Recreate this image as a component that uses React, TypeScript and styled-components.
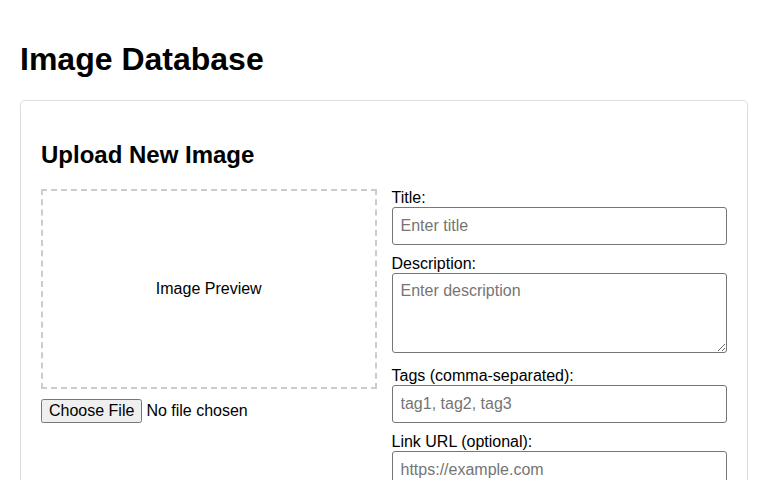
import React from "react";
import styled, { createGlobalStyle } from "styled-components";

const GlobalStyle = createGlobalStyle`
  html, body {
    margin: 0;
    padding: 0;
    background: #ffffff;
    color: #000000;
    font-family: "Liberation Sans", Arial, sans-serif;
  }
  * { box-sizing: border-box; }
`;

const Page = styled.div`
  padding: 20px;
  font-family: "Liberation Sans", Arial, sans-serif;
`;

const Title = styled.h1`
  font-size: 32px;
  font-weight: bold;
  margin: 21.44px 0;
`;

const Card = styled.section`
  border: 1px solid #dddddd;
  border-radius: 5px;
  padding: 20px;
`;

const CardTitle = styled.h2`
  font-size: 24px;
  font-weight: bold;
  margin: 19.92px 0;
`;

const Grid = styled.div`
  display: grid;
  grid-template-columns: 1fr 1fr;
  gap: 15px;
  align-items: start;
`;

const Column = styled.div`
  min-width: 0;
`;

const Preview = styled.div`
  height: 200px;
  border: 2px dashed #cccccc;
  display: flex;
  align-items: center;
  justify-content: center;
  font-size: 16px;
`;

const FileInput = styled.input`
  display: block;
  margin-top: 10px;
  font-family: "Liberation Sans", Arial, sans-serif;
  font-size: 16px;
`;

const FormGroup = styled.div`
  margin-bottom: 10px;
`;

const Label = styled.label`
  display: block;
  font-size: 16px;
`;

const fieldStyles = `
  width: 100%;
  font-family: "Liberation Sans", Arial, sans-serif;
  font-size: 16px;
  border: 1px solid #767676;
  border-radius: 3px;
  color: #000;
  &::placeholder { color: #757575; }
`;

const TextInput = styled.input`
  ${fieldStyles}
  height: 38px;
  padding: 8px;
`;

const TextArea = styled.textarea`
  ${fieldStyles}
  height: 80px;
  padding: 8px;
`;

const SubmitButton = styled.button`
  font-family: "Liberation Sans", Arial, sans-serif;
  font-size: 16px;
  padding: 10px 20px;
  background: #4caf50;
  color: #fff;
  border: none;
  border-radius: 4px;
`;

export default function App() {
  return (
    <>
      <GlobalStyle />
      <Page>
        <Title>Image Database</Title>
        <Card>
          <CardTitle>Upload New Image</CardTitle>
          <Grid>
            <Column>
              <Preview>Image Preview</Preview>
              <FileInput type="file" accept="image/*" />
            </Column>
            <Column>
              <FormGroup>
                <Label htmlFor="title">Title:</Label>
                <TextInput id="title" type="text" placeholder="Enter title" />
              </FormGroup>
              <FormGroup>
                <Label htmlFor="desc">Description:</Label>
                <TextArea id="desc" placeholder="Enter description" />
              </FormGroup>
              <FormGroup>
                <Label htmlFor="tags">Tags (comma-separated):</Label>
                <TextInput id="tags" type="text" placeholder="tag1, tag2, tag3" />
              </FormGroup>
              <FormGroup>
                <Label htmlFor="link">Link URL (optional):</Label>
                <TextInput id="link" type="url" placeholder="https://example.com" />
              </FormGroup>
              <SubmitButton type="button">Upload Image</SubmitButton>
            </Column>
          </Grid>
        </Card>
      </Page>
    </>
  );
}
